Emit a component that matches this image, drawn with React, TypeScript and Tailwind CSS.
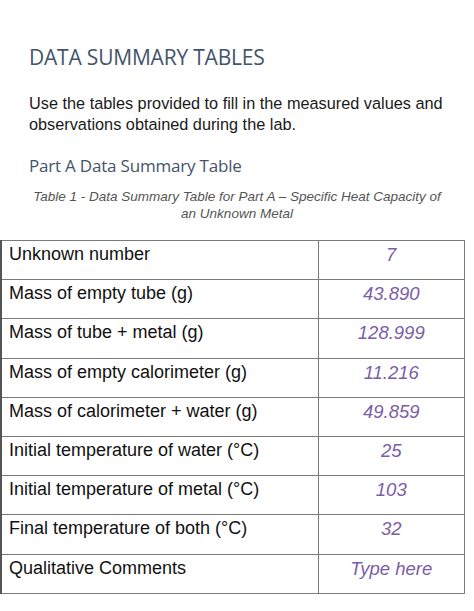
import React from "react";

const rows = [
  { label: "Unknown number", value: "7" },
  { label: "Mass of empty tube (g)", value: "43.890" },
  { label: "Mass of tube + metal (g)", value: "128.999" },
  { label: "Mass of empty calorimeter (g)", value: "11.216" },
  { label: "Mass of calorimeter + water (g)", value: "49.859" },
  { label: "Initial temperature of water (°C)", value: "25" },
  { label: "Initial temperature of metal (°C)", value: "103" },
  { label: "Final temperature of both (°C)", value: "32" },
  { label: "Qualitative Comments", value: "Type here" },
];

export default function App() {
  return (
    <div className="w-[474px] h-[611px] bg-white overflow-hidden font-['Liberation_Sans',Arial,sans-serif]">
      <div className="pl-[29px] pr-[16px] pt-[44px]">
        <h1 className="font-['Open_Sans',sans-serif] text-[21px] leading-[26px] font-normal text-[#44546a] tracking-[-0.2px]">
          DATA SUMMARY TABLES
        </h1>
        <p className="mt-[23px] text-[16.3px] leading-[21px] text-[#1a1a1a]">
          Use the tables provided to fill in the measured values and observations obtained during the lab.
        </p>
        <h2 className="mt-[19px] font-['Open_Sans',sans-serif] text-[17px] leading-[24px] text-[#44546a] tracking-[-0.2px]">
          Part A Data Summary Table
        </h2>
      </div>
      <p className="mt-[10px] w-[474px] text-center italic text-[13.5px] leading-[17px] text-[#555]">
        Table 1 - Data Summary Table for Part A – Specific Heat Capacity of
        <br />
        an Unknown Metal
      </p>

      <table className="mt-[18px] w-[465px] border-collapse text-[18px] leading-[21px]">
        <tbody>
          {rows.map((row) => (
            <tr key={row.label} className="h-[39.2px]">
              <td className="w-[317px] align-top pt-[3px] pl-[7px] border-y-[1.5px] border-r-[1.5px] border-[#7a7a7a] border-l-[2px] border-l-[#555] text-[#111]">
                {row.label}
              </td>
              <td className="align-top pt-[3px] text-center italic text-[18.5px] text-[#7b5ea7] border-y-[1.5px] border-r-[1.5px] border-[#7a7a7a]">
                {row.value}
              </td>
            </tr>
          ))}
        </tbody>
      </table>
    </div>
  );
}
